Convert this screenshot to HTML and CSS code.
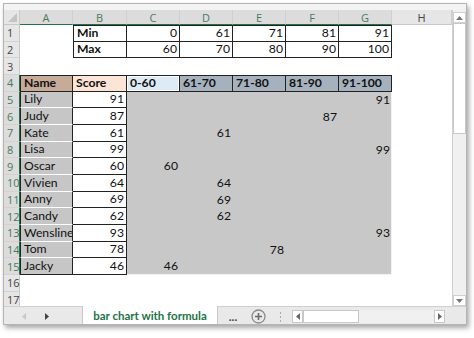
FILE: index.html
```html
<!DOCTYPE html>
<html>
<head>
<meta charset="utf-8">
<link rel="stylesheet" href="styles.css">
</head>
<body>
<div class="window">
  <div class="topstrip"></div>
  <div class="main">
    <div class="sheet">
      <!-- header row -->
      <div class="corner"><svg width="9" height="9" viewBox="0 0 9 9"><polygon points="9,0 9,9 0,9" fill="#c4c4c4"/></svg></div>
      <div class="ch sel">A</div>
      <div class="ch sel">B</div>
      <div class="ch sel">C</div>
      <div class="ch sel">D</div>
      <div class="ch sel">E</div>
      <div class="ch sel">F</div>
      <div class="ch sel">G</div>
      <div class="ch">H</div>

      <!-- row 1 -->
      <div class="rh">1</div>
      <div class="c"></div>
      <div class="c b bl bt bold">Min</div>
      <div class="c b bt num">0</div>
      <div class="c b bt num">61</div>
      <div class="c b bt num">71</div>
      <div class="c b bt num">81</div>
      <div class="c b bt num">91</div>
      <div class="c"></div>

      <!-- row 2 -->
      <div class="rh">2</div>
      <div class="c"></div>
      <div class="c b bl bold">Max</div>
      <div class="c b num">60</div>
      <div class="c b num">70</div>
      <div class="c b num">80</div>
      <div class="c b num">90</div>
      <div class="c b num">100</div>
      <div class="c"></div>

      <!-- row 3 -->
      <div class="rh">3</div>
      <div class="c"></div><div class="c"></div><div class="c"></div><div class="c"></div><div class="c"></div><div class="c"></div><div class="c"></div><div class="c"></div>

      <!-- row 4 -->
      <div class="rh rsel">4</div>
      <div class="c b bl bt bold tan">Name</div>
      <div class="c b bt bold peach">Score</div>
      <div class="c b bt bold active">0-60</div>
      <div class="c b bt bold slate">61-70</div>
      <div class="c b bt bold slate">71-80</div>
      <div class="c b bt bold slate">81-90</div>
      <div class="c b bt bold slate">91-100</div>
      <div class="c"></div>

      <!-- data rows -->
      <div class="rh rsel">5</div>
      <div class="c name">Lily</div><div class="c b num">91</div>
      <div class="c g"></div><div class="c g"></div><div class="c g"></div><div class="c g"></div><div class="c g num ge">91</div><div class="c"></div>

      <div class="rh rsel">6</div>
      <div class="c name">Judy</div><div class="c b num">87</div>
      <div class="c g"></div><div class="c g"></div><div class="c g"></div><div class="c g num">87</div><div class="c g ge"></div><div class="c"></div>

      <div class="rh rsel">7</div>
      <div class="c name">Kate</div><div class="c b num">61</div>
      <div class="c g"></div><div class="c g num">61</div><div class="c g"></div><div class="c g"></div><div class="c g ge"></div><div class="c"></div>

      <div class="rh rsel">8</div>
      <div class="c name">Lisa</div><div class="c b num">99</div>
      <div class="c g"></div><div class="c g"></div><div class="c g"></div><div class="c g"></div><div class="c g num ge">99</div><div class="c"></div>

      <div class="rh rsel">9</div>
      <div class="c name">Oscar</div><div class="c b num">60</div>
      <div class="c g num">60</div><div class="c g"></div><div class="c g"></div><div class="c g"></div><div class="c g ge"></div><div class="c"></div>

      <div class="rh rsel">10</div>
      <div class="c name">Vivien</div><div class="c b num">64</div>
      <div class="c g"></div><div class="c g num">64</div><div class="c g"></div><div class="c g"></div><div class="c g ge"></div><div class="c"></div>

      <div class="rh rsel">11</div>
      <div class="c name">Anny</div><div class="c b num">69</div>
      <div class="c g"></div><div class="c g num">69</div><div class="c g"></div><div class="c g"></div><div class="c g ge"></div><div class="c"></div>

      <div class="rh rsel">12</div>
      <div class="c name">Candy</div><div class="c b num">62</div>
      <div class="c g"></div><div class="c g num">62</div><div class="c g"></div><div class="c g"></div><div class="c g ge"></div><div class="c"></div>

      <div class="rh rsel">13</div>
      <div class="c name">Wensline</div><div class="c b num">93</div>
      <div class="c g"></div><div class="c g"></div><div class="c g"></div><div class="c g"></div><div class="c g num ge">93</div><div class="c"></div>

      <div class="rh rsel">14</div>
      <div class="c name">Tom</div><div class="c b num">78</div>
      <div class="c g"></div><div class="c g"></div><div class="c g num">78</div><div class="c g"></div><div class="c g ge"></div><div class="c"></div>

      <div class="rh rsel">15</div>
      <div class="c name last">Jacky</div><div class="c b num">46</div>
      <div class="c g gb num">46</div><div class="c g gb"></div><div class="c g gb"></div><div class="c g gb"></div><div class="c g gb ge"></div><div class="c"></div>

      <div class="rh">16</div>
      <div class="c"></div><div class="c"></div><div class="c"></div><div class="c"></div><div class="c"></div><div class="c"></div><div class="c"></div><div class="c"></div>

      <div class="rh">17</div>
      <div class="c"></div><div class="c"></div><div class="c"></div><div class="c"></div><div class="c"></div><div class="c"></div><div class="c"></div><div class="c"></div>
    </div>
    <div class="vscroll">
      <div class="vbtn"><svg width="7" height="4" viewBox="0 0 7 4"><polygon points="0,4 7,4 3.5,0" fill="#777"/></svg></div>
      <div class="vthumb"></div>
      <div class="vtrack"></div>
      <div class="vbtn"><svg width="7" height="4" viewBox="0 0 7 4"><polygon points="0,0 7,0 3.5,4" fill="#777"/></svg></div>
    </div>
  </div>
  <div class="tabbar">
    <div class="navs">
      <span class="nav dim"><svg width="4" height="7" viewBox="0 0 4 7"><polygon points="4,0 4,7 0,3.5" fill="#c8c8c8"/></svg></span>
      <span class="nav"><svg width="4" height="7" viewBox="0 0 4 7"><polygon points="0,0 0,7 4,3.5" fill="#444"/></svg></span>
    </div>
    <div class="tab">bar chart with formula</div>
    <div class="more">...</div>
    <div class="add"><svg width="15" height="15" viewBox="0 0 15 15"><circle cx="7.5" cy="7.5" r="6.5" fill="none" stroke="#8a8a8a" stroke-width="1.3"/><path d="M7.5 4v7M4 7.5h7" stroke="#6a6a6a" stroke-width="1.6"/></svg></div>
    <div class="vdots"><i></i><i></i><i></i></div>
    <div class="hscroll">
      <div class="hbtn"><svg width="4" height="7" viewBox="0 0 4 7"><polygon points="4,0 4,7 0,3.5" fill="#666"/></svg></div>
      <div class="hthumb"></div>
      <div class="htrack"></div>
      <div class="hbtn"><svg width="4" height="7" viewBox="0 0 4 7"><polygon points="0,0 0,7 4,3.5" fill="#666"/></svg></div>
    </div>
  </div>
</div>
</body>
</html>
```

FILE: styles.css
```css
html, body {
  margin: 0;
  padding: 0;
  background: #ffffff;
}
body {
  width: 474px;
  height: 338px;
  overflow: hidden;
  font-family: Lato, "Liberation Sans", sans-serif;
}
.window {
  margin: 3px 0 0 3px;
  width: 464px;
  height: 322px;
  box-sizing: border-box;
  border: 1px solid #b4b4b4;
  background: #f3f3f3;
  box-shadow: 2px 3px 5px rgba(0,0,0,0.35);
  display: flex;
  flex-direction: column;
  overflow: hidden;
}
.topstrip {
  height: 6px;
  background: #f3f3f3;
  flex: none;
}
.main {
  display: flex;
  height: 296px;
  flex: none;
}
.sheet {
  flex: 1;
  display: grid;
  grid-template-columns: 16px 53px 54px 53px 53px 53px 53px 53px 1fr;
  grid-template-rows: 15px repeat(17, 16.67px);
  background: #fff;
  overflow: hidden;
}
.corner {
  background: #e6e6e6;
  border-right: 1px solid #c8c8c8;
  border-bottom: 1px solid #c8c8c8;
  box-sizing: border-box;
  display: flex;
  align-items: flex-end;
  justify-content: flex-end;
  padding: 0 2px 2px 0;
}
.corner svg { display: block; }
.ch {
  background: #e6e6e6;
  border-right: 1px solid #cfcfcf;
  border-bottom: 1px solid #c8c8c8;
  box-sizing: border-box;
  font-family: "Open Sans", "Noto Sans", sans-serif;
  font-size: 11px;
  color: #444;
  display: flex;
  align-items: center;
  justify-content: center;
  line-height: 1;
}
.ch.sel {
  background: #dcdcdc;
  color: #4a7a5c;
  border-bottom: 1px solid #217346;
}
.rh {
  background: #e6e6e6;
  border-right: 1px solid #c8c8c8;
  border-bottom: 1px solid #d2d2d2;
  box-sizing: border-box;
  font-family: "Open Sans", "Noto Sans", sans-serif;
  font-size: 11px;
  color: #444;
  display: flex;
  align-items: center;
  padding-left: 3px;
  line-height: 1;
}
.rh.rsel {
  background: #dcdcdc;
  color: #4a7a5c;
  border-right: 1px solid #217346;
}
.c {
  box-sizing: border-box;
  font-size: 12.2px;
  color: #111;
  display: flex;
  align-items: center;
  padding: 0 2px 0 3px;
  white-space: nowrap;
  overflow: hidden;
  line-height: 1;
}
.b {
  border-right: 1px solid #222;
  border-bottom: 1px solid #222;
}
.bl { border-left: 1px solid #222; }
.bt { border-top: 1px solid #222; }
.bold { font-weight: bold; }
.num { justify-content: flex-end; }
.tan { background: #c6ab98; }
.peach { background: #fce4d6; }
.slate { background: #a6b1be; }
.active {
  background: #ddebf7;
  box-shadow: inset 0 0 0 1px #ffffff;
}
.name {
  background: #c6c6c6;
  border-left: 1px solid #222;
  border-bottom: 1px solid #ffffff;
  border-right: 1px solid #222;
}
.name.last { border-bottom: 1px solid #222; }
.g {
  background: #c8c8c8;
}
.g.ge { box-shadow: inset -1px 0 0 #f2f2f2; }
.g.gb { box-shadow: inset 0 -1px 0 #f2f2f2; }
.g.gb.ge { box-shadow: inset -1px -1px 0 #f2f2f2; }

.vscroll {
  width: 14px;
  flex: none;
  background: #f0f0f0;
  border-left: 1px solid #d0d0d0;
  box-sizing: border-box;
  display: flex;
  flex-direction: column;
  padding-top: 2px;
}
.vbtn {
  height: 11px;
  background: #fff;
  border: 1px solid #d0d0d0;
  box-sizing: border-box;
  display: flex;
  align-items: center;
  justify-content: center;
  flex: none;
}
.vbtn svg { display: block; }
.vthumb {
  height: 111px;
  background: #ffffff;
  border: 1px solid #c8c8c8;
  box-sizing: border-box;
  flex: none;
}
.vtrack { flex: 1; }

.tabbar {
  flex: 1;
  display: flex;
  align-items: stretch;
  background: #e9e9e9;
  border-top: 1px solid #cfcfcf;
}
.navs {
  width: 78px;
  display: flex;
  align-items: center;
  gap: 19px;
  padding-left: 18px;
  box-sizing: border-box;
}
.nav svg { display: block; }
.tab {
  width: 136px;
  background: #fff;
  border-left: 1px solid #c8c8c8;
  border-right: 1px solid #c8c8c8;
  border-bottom: 2px solid #217346;
  margin-top: -1px;
  box-sizing: border-box;
  color: #217346;
  font-weight: bold;
  font-size: 11.5px;
  display: flex;
  align-items: center;
  justify-content: center;
  white-space: nowrap;
}
.more {
  width: 30px;
  display: flex;
  align-items: center;
  justify-content: center;
  font-weight: bold;
  font-size: 12px;
  color: #444;
}
.add {
  width: 20px;
  display: flex;
  align-items: center;
  justify-content: center;
}
.add svg { display: block; }
.vdots {
  width: 24px;
  display: flex;
  flex-direction: column;
  align-items: center;
  justify-content: center;
  gap: 2px;
}
.vdots i {
  display: block;
  width: 1px;
  height: 2px;
  background: #aaa;
}
.hscroll {
  width: 153px;
  display: flex;
  align-items: center;
  margin: 3px 0;
  background: #f0f0f0;
}
.hbtn {
  width: 11px;
  height: 13px;
  background: #fff;
  border: 1px solid #c8c8c8;
  box-sizing: border-box;
  display: flex;
  align-items: center;
  justify-content: center;
  flex: none;
}
.hbtn svg { display: block; }
.hthumb {
  width: 56px;
  height: 13px;
  background: #fff;
  border: 1px solid #c8c8c8;
  box-sizing: border-box;
  flex: none;
}
.htrack { flex: 1; }
```
